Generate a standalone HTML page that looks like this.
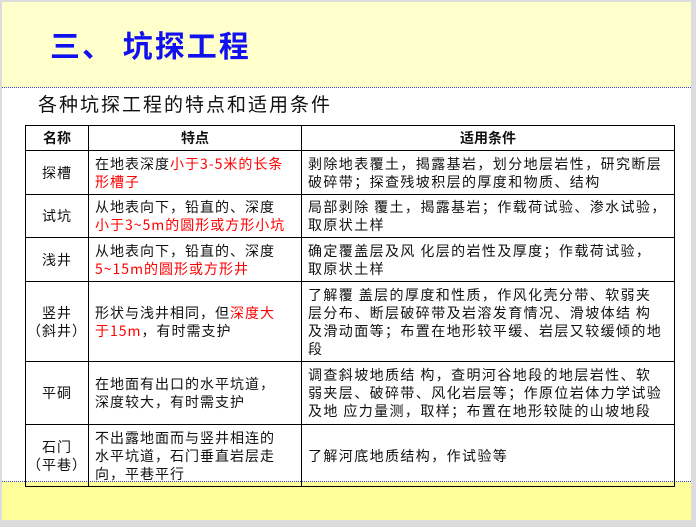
<!DOCTYPE html>
<html><head><meta charset="utf-8"><style>
body{margin:0;width:696px;height:527px;background:#dcdcdc;position:relative;overflow:hidden;font-family:"Liberation Sans","Noto Sans CJK SC",sans-serif;}
.page{position:absolute;left:2px;top:2px;width:689px;height:517px;background:#fff;}
.top{position:absolute;left:2px;top:2px;width:689px;height:85px;background:#ffffcc;border-bottom:1px dotted #3344ee;}
.bot{position:absolute;left:2px;top:481px;width:689px;height:38px;background:#ffff99;border-top:1px dotted #3344ee;}
.title{position:absolute;left:50px;top:23px;font-size:30px;font-weight:bold;color:#1010f0;font-family:"Noto Sans CJK SC",sans-serif;line-height:42px;letter-spacing:2px}
.sub{position:absolute;left:38px;top:92px;font-size:19px;color:#111;font-family:"Noto Sans CJK SC",sans-serif;line-height:24px;letter-spacing:2px}
table{position:absolute;left:25px;top:125px;border-collapse:collapse;font-size:14px;color:#111;font-family:"Noto Sans CJK SC",sans-serif;}
td{border:1.5px solid #000;padding:0 6px;line-height:18px;letter-spacing:1px;vertical-align:middle}
td.w{letter-spacing:1.4px}
td.c{text-align:center;padding:0}
th{border:1.5px solid #000;font-size:14px;font-weight:bold;height:24px;padding:0}
.r{color:#f00}
</style></head><body>
<div class="page"></div><div class="top"></div><div class="bot"></div>
<div class="title">三、 坑探工程</div>
<div class="sub">各种坑探工程的特点和适用条件</div>
<table>
<colgroup><col style="width:63px"><col style="width:213px"><col style="width:373px"></colgroup>
<tr><th>名称</th><th>特点</th><th>适用条件</th></tr>
<tr style="height:44px"><td class="c">探槽</td><td>在地表深度<span class="r">小于3-5米的长条<br>形槽子</span></td><td class="w">剥除地表覆土，揭露基岩，划分地层岩性，研究断层<br>破碎带；探查残坡积层的厚度和物质、结构</td></tr>
<tr style="height:43px"><td class="c">试坑</td><td>从地表向下，铅直的、深度<br><span class="r">小于3~5m的圆形或方形小坑</span></td><td class="w">局部剥除 覆土，揭露基岩；作载荷试验、渗水试验，<br>取原状土样</td></tr>
<tr style="height:44px"><td class="c">浅井</td><td>从地表向下，铅直的、深度<br><span class="r">5~15m的圆形或方形井</span></td><td class="w">确定覆盖层及风 化层的岩性及厚度；作载荷试验，<br>取原状土样</td></tr>
<tr style="height:80px"><td class="c">竖井<br>（斜井）</td><td>形状与浅井相同，但<span class="r">深度大<br>于15m</span>，有时需支护</td><td class="w">了解覆 盖层的厚度和性质，作风化壳分带、软弱夹<br>层分布、断层破碎带及岩溶发育情况、滑坡体结 构<br>及滑动面等；布置在地形较平缓、岩层又较缓倾的地<br>段</td></tr>
<tr style="height:63px"><td class="c">平硐</td><td>在地面有出口的水平坑道，<br>深度较大，有时需支护</td><td class="w">调查斜坡地质结 构，查明河谷地段的地层岩性、软<br>弱夹层、破碎带、风化岩层等；作原位岩体力学试验<br>及地 应力量测，取样；布置在地形较陡的山坡地段</td></tr>
<tr style="height:62px"><td class="c">石门<br>（平巷）</td><td>不出露地面而与竖井相连的<br>水平坑道，石门垂直岩层走<br>向，平巷平行</td><td class="w">了解河底地质结构，作试验等</td></tr>
</table>
</body></html>
